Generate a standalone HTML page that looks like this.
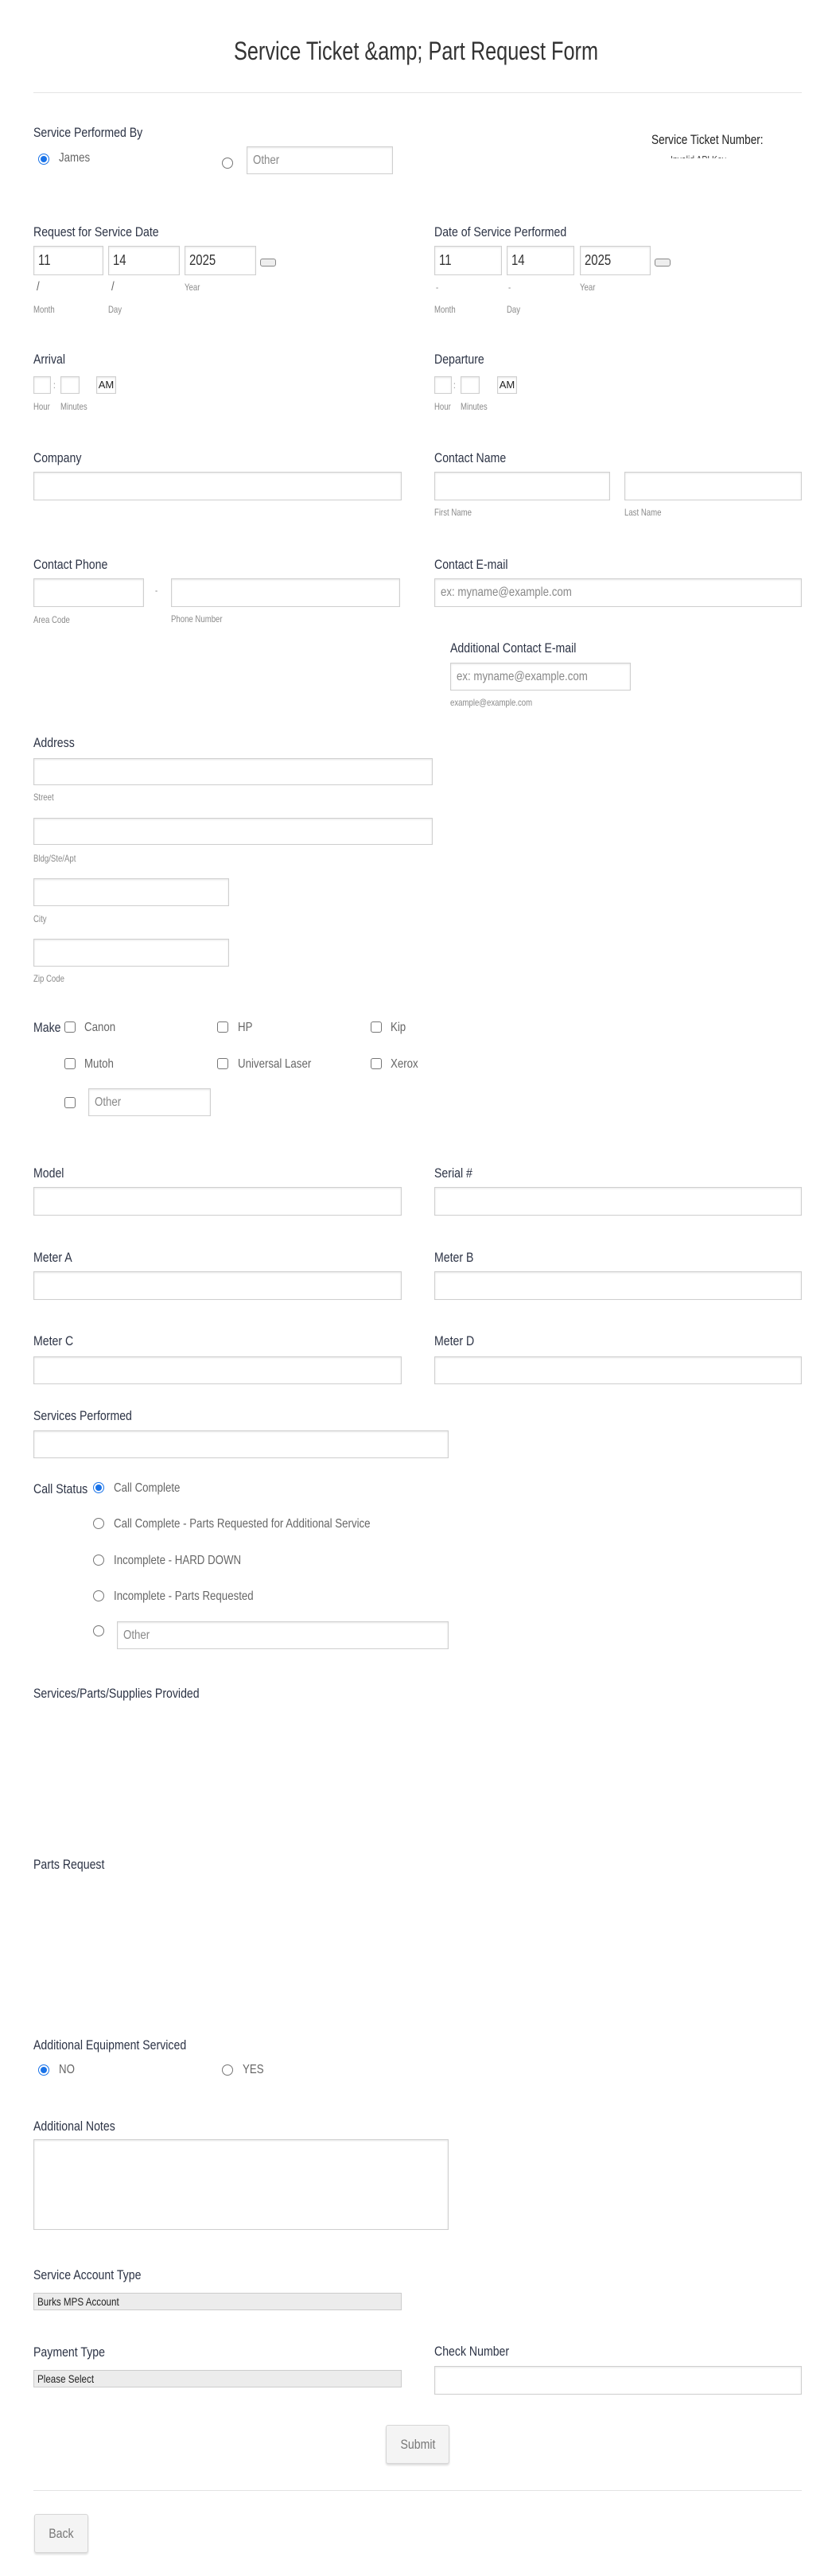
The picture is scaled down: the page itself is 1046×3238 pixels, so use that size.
<!DOCTYPE html>
<html><head><meta charset="utf-8"><style>
*{box-sizing:border-box;margin:0;padding:0}
body{width:1046px;height:3238px;background:#fff;position:relative;overflow:hidden;font-family:"Liberation Sans",sans-serif;color:#2c3345}
.a{position:absolute;white-space:nowrap;transform-origin:left center}
.t{font-size:32px;color:#333;transform:scaleX(.79);transform-origin:center center}
.l{font-size:17px;color:#2c3345;transform:translateY(-50%) scaleX(.83)}
.s{font-size:12px;color:#8a8a8a;transform:translateY(-50%) scaleX(.8)}
.o{font-size:16px;color:#666;transform:translateY(-50%) scaleX(.83)}
.i{position:absolute;border:1px solid #cfcfcf;background:#fff;box-shadow:inset 0 1px 2px #e6e6e6}
.ph{font-size:16px;color:#888;padding-left:7px;display:flex;align-items:center}
.ph span,.v span,.sel span{display:inline-block;transform:scaleX(.83);transform-origin:left center;white-space:nowrap}
.v{font-size:18px;color:#333;padding-left:5px;display:flex;align-items:center}
.r{position:absolute;width:14px;height:14px;border:1px solid #767676;border-radius:50%;background:#fff;transform:translate(-50%,-50%)}
.r.on{border:1px solid #1a73e8}
.r.on:after{content:"";position:absolute;left:2px;top:2px;width:8px;height:8px;border-radius:50%;background:#1a73e8}
.c{position:absolute;width:14px;height:14px;border:1px solid #767676;border-radius:3px;background:#fff;transform:translate(-50%,-50%)}
.hr{position:absolute;left:42px;width:966px;height:1px;background:#e4e4e4}
.sel{position:absolute;background:#ececec;border:1px solid #ccc;font-size:14px;color:#222;padding-left:4px;display:flex;align-items:center}
.btn{position:absolute;background:#f4f4f4;border:1px solid #d6d6d6;border-radius:3px;box-shadow:0 2px 2px #ddd;font-size:17px;color:#777;display:flex;align-items:center;justify-content:center}
.btn span{display:inline-block;transform:scaleX(.83)}
.cal{position:absolute;width:20px;height:10px;border:1.5px solid #888;border-radius:3px;background:#eee}
</style></head><body>
<div class="a t" style="left:0;width:1046px;text-align:center;top:46px">Service Ticket &amp;amp; Part Request Form</div>
<div class="hr" style="top:116px"></div>

<div class="a l" style="left:42px;top:167px">Service Performed By</div>
<div class="r on" style="left:55px;top:200px"></div><div class="a o" style="left:74px;top:199px">James</div>
<div class="r" style="left:286px;top:205px"></div>
<div class="i ph" style="left:310px;top:184px;width:184px;height:35px"><span>Other</span></div>
<div class="a" style="left:819px;top:166px;font-size:17px;color:#222;transform:scaleX(.8)">Service Ticket Number:</div>
<div class="a" style="left:843px;top:193px;height:6px;overflow:hidden;font-size:13px;color:#444;transform:scaleX(.8)">Invalid API Key</div>

<div class="a l" style="left:42px;top:292px">Request for Service Date</div>
<div class="i v" style="left:42px;top:309px;width:88px;height:37px"><span>11</span></div>
<div class="i v" style="left:136px;top:309px;width:90px;height:37px"><span>14</span></div>
<div class="i v" style="left:232px;top:309px;width:90px;height:37px"><span>2025</span></div>
<div class="cal" style="left:327px;top:325px"></div>
<div class="a o" style="left:46px;top:361px">/</div><div class="a o" style="left:140px;top:361px">/</div>
<div class="a s" style="left:232px;top:361px">Year</div>
<div class="a s" style="left:42px;top:389px">Month</div><div class="a s" style="left:136px;top:389px">Day</div>

<div class="a l" style="left:546px;top:292px">Date of Service Performed</div>
<div class="i v" style="left:546px;top:309px;width:85px;height:37px"><span>11</span></div>
<div class="i v" style="left:637px;top:309px;width:85px;height:37px"><span>14</span></div>
<div class="i v" style="left:729px;top:309px;width:89px;height:37px"><span>2025</span></div>
<div class="cal" style="left:823px;top:325px"></div>
<div class="a s" style="left:548px;top:361px">-</div><div class="a s" style="left:639px;top:361px">-</div>
<div class="a s" style="left:729px;top:361px">Year</div>
<div class="a s" style="left:546px;top:389px">Month</div><div class="a s" style="left:637px;top:389px">Day</div>

<div class="a l" style="left:42px;top:452px">Arrival</div>
<div class="i" style="left:42px;top:473px;width:22px;height:22px"></div><div class="a s" style="left:67px;top:484px">:</div>
<div class="i" style="left:76px;top:473px;width:24px;height:22px"></div>
<div class="i" style="left:121px;top:473px;width:25px;height:22px;font-size:13px;color:#222;text-align:center;line-height:20px">AM</div>
<div class="a s" style="left:42px;top:511px">Hour</div><div class="a s" style="left:76px;top:511px">Minutes</div>

<div class="a l" style="left:546px;top:452px">Departure</div>
<div class="i" style="left:546px;top:473px;width:22px;height:22px"></div><div class="a s" style="left:570px;top:484px">:</div>
<div class="i" style="left:579px;top:473px;width:24px;height:22px"></div>
<div class="i" style="left:625px;top:473px;width:25px;height:22px;font-size:13px;color:#222;text-align:center;line-height:20px">AM</div>
<div class="a s" style="left:546px;top:511px">Hour</div><div class="a s" style="left:579px;top:511px">Minutes</div>

<div class="a l" style="left:42px;top:576px">Company</div>
<div class="i" style="left:42px;top:593px;width:463px;height:36px"></div>
<div class="a l" style="left:546px;top:576px">Contact Name</div>
<div class="i" style="left:546px;top:593px;width:221px;height:36px"></div>
<div class="i" style="left:785px;top:593px;width:223px;height:36px"></div>
<div class="a s" style="left:546px;top:644px">First Name</div><div class="a s" style="left:785px;top:644px">Last Name</div>

<div class="a l" style="left:42px;top:710px">Contact Phone</div>
<div class="i" style="left:42px;top:727px;width:139px;height:36px"></div>
<div class="a s" style="left:195px;top:742px">-</div>
<div class="i" style="left:215px;top:727px;width:288px;height:36px"></div>
<div class="a s" style="left:42px;top:779px">Area Code</div><div class="a s" style="left:215px;top:778px">Phone Number</div>
<div class="a l" style="left:546px;top:710px">Contact E-mail</div>
<div class="i ph" style="left:546px;top:727px;width:462px;height:36px"><span>ex: myname@example.com</span></div>

<div class="a l" style="left:566px;top:815px">Additional Contact E-mail</div>
<div class="i ph" style="left:566px;top:833px;width:227px;height:35px"><span>ex: myname@example.com</span></div>
<div class="a s" style="left:566px;top:883px">example@example.com</div>

<div class="a l" style="left:42px;top:934px">Address</div>
<div class="i" style="left:42px;top:953px;width:502px;height:34px"></div>
<div class="a s" style="left:42px;top:1002px">Street</div>
<div class="i" style="left:42px;top:1028px;width:502px;height:34px"></div>
<div class="a s" style="left:42px;top:1079px">Bldg/Ste/Apt</div>
<div class="i" style="left:42px;top:1104px;width:246px;height:35px"></div>
<div class="a s" style="left:42px;top:1155px">City</div>
<div class="i" style="left:42px;top:1180px;width:246px;height:35px"></div>
<div class="a s" style="left:42px;top:1230px">Zip Code</div>

<div class="a l" style="left:42px;top:1292px">Make</div>
<div class="c" style="left:88px;top:1291px"></div><div class="a o" style="left:106px;top:1292px">Canon</div>
<div class="c" style="left:280px;top:1291px"></div><div class="a o" style="left:299px;top:1292px">HP</div>
<div class="c" style="left:473px;top:1291px"></div><div class="a o" style="left:491px;top:1292px">Kip</div>
<div class="c" style="left:88px;top:1337px"></div><div class="a o" style="left:106px;top:1338px">Mutoh</div>
<div class="c" style="left:280px;top:1337px"></div><div class="a o" style="left:299px;top:1338px">Universal Laser</div>
<div class="c" style="left:473px;top:1337px"></div><div class="a o" style="left:491px;top:1338px">Xerox</div>
<div class="c" style="left:88px;top:1386px"></div>
<div class="i ph" style="left:111px;top:1368px;width:154px;height:35px"><span>Other</span></div>

<div class="a l" style="left:42px;top:1475px">Model</div>
<div class="i" style="left:42px;top:1492px;width:463px;height:36px"></div>
<div class="a l" style="left:546px;top:1475px">Serial #</div>
<div class="i" style="left:546px;top:1492px;width:462px;height:36px"></div>
<div class="a l" style="left:42px;top:1581px">Meter A</div>
<div class="i" style="left:42px;top:1598px;width:463px;height:36px"></div>
<div class="a l" style="left:546px;top:1581px">Meter B</div>
<div class="i" style="left:546px;top:1598px;width:462px;height:36px"></div>
<div class="a l" style="left:42px;top:1686px">Meter C</div>
<div class="i" style="left:42px;top:1705px;width:463px;height:35px"></div>
<div class="a l" style="left:546px;top:1686px">Meter D</div>
<div class="i" style="left:546px;top:1705px;width:462px;height:35px"></div>

<div class="a l" style="left:42px;top:1780px">Services Performed</div>
<div class="i" style="left:42px;top:1798px;width:522px;height:35px"></div>

<div class="a l" style="left:42px;top:1872px">Call Status</div>
<div class="r on" style="left:124px;top:1870px"></div><div class="a o" style="left:143px;top:1871px">Call Complete</div>
<div class="r" style="left:124px;top:1915px"></div><div class="a o" style="left:143px;top:1916px">Call Complete - Parts Requested for Additional Service</div>
<div class="r" style="left:124px;top:1961px"></div><div class="a o" style="left:143px;top:1962px">Incomplete - HARD DOWN</div>
<div class="r" style="left:124px;top:2006px"></div><div class="a o" style="left:143px;top:2007px">Incomplete - Parts Requested</div>
<div class="r" style="left:124px;top:2050px"></div>
<div class="i ph" style="left:147px;top:2038px;width:417px;height:35px"><span>Other</span></div>

<div class="a l" style="left:42px;top:2129px">Services/Parts/Supplies Provided</div>
<div class="a l" style="left:42px;top:2344px">Parts Request</div>

<div class="a l" style="left:42px;top:2571px">Additional Equipment Serviced</div>
<div class="r on" style="left:55px;top:2602px"></div><div class="a o" style="left:74px;top:2602px">NO</div>
<div class="r" style="left:286px;top:2602px"></div><div class="a o" style="left:305px;top:2602px">YES</div>

<div class="a l" style="left:42px;top:2673px">Additional Notes</div>
<div class="i" style="left:42px;top:2689px;width:522px;height:114px"></div>

<div class="a l" style="left:42px;top:2860px">Service Account Type</div>
<div class="sel" style="left:42px;top:2882px;width:463px;height:22px"><span>Burks MPS Account</span></div>
<div class="a l" style="left:42px;top:2957px">Payment Type</div>
<div class="sel" style="left:42px;top:2979px;width:463px;height:22px"><span>Please Select</span></div>
<div class="a l" style="left:546px;top:2956px">Check Number</div>
<div class="i" style="left:546px;top:2974px;width:462px;height:36px"></div>

<div class="btn" style="left:485px;top:3048px;width:80px;height:49px"><span>Submit</span></div>
<div class="hr" style="top:3130px"></div>
<div class="btn" style="left:43px;top:3160px;width:68px;height:49px"><span>Back</span></div>
</body></html>
